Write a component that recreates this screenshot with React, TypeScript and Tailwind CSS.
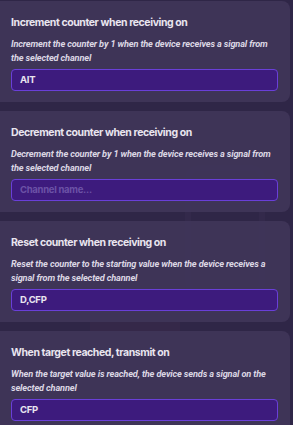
import type React from 'react';

type Field = {
	title: string;
	description: string;
	value: string;
};

const fields: Field[] = [
	{
		title: 'Increment counter when receiving on',
		description: 'Increment the counter by 1 when the device receives a signal from the selected channel',
		value: 'AIT',
	},
	{
		title: 'Decrement counter when receiving on',
		description: 'Decrement the counter by 1 when the device receives a signal from the selected channel',
		value: '',
	},
	{
		title: 'Reset counter when receiving on',
		description:
			'Reset the counter to the starting value when the device receives a signal from the selected channel',
		value: 'D,CFP',
	},
	{
		title: 'When target reached, transmit on',
		description: 'When the target value is reached, the device sends a signal on the selected channel',
		value: 'CFP',
	},
];

const App: React.FC = () => {
	return (
		<div
			className="relative h-[425px] w-[293px] overflow-hidden bg-[#2f2647]"
			style={{ fontFamily: 'Inter, "Noto Sans", sans-serif' }}
		>
			{/* faint device art behind the panel */}
			<div className="pointer-events-none absolute top-[165px] left-[185px] h-[130px] w-[80px] rounded-[14px] border-[6px] border-[#4a3a66] opacity-15" />
			<div className="pointer-events-none absolute top-[300px] left-[90px] h-[125px] w-[90px] rounded-[10px] bg-[#5a3358] opacity-15" />

			<div className="relative flex flex-col gap-[9px] pt-px">
				{fields.map((field) => (
					<div
						key={field.title}
						className="h-[101px] w-[290px] rounded-r-lg bg-[#3f3558]/95 px-[11px] pt-[15px]"
					>
						<div className="text-[10.5px] leading-[14px] font-bold tracking-[-0.04em] text-[#e9e5ef]">
							{field.title}
						</div>
						<div
							className="mt-[7px] text-[9.2px] leading-[14px] font-bold tracking-[-0.015em] text-[#dcd7e4] italic"
							style={{ fontFamily: 'Roboto, "Liberation Sans", sans-serif' }}
						>
							{field.description}
						</div>
						<input
							type="text"
							readOnly
							value={field.value}
							placeholder="Channel name..."
							className="mt-[2px] h-[22px] w-[267px] rounded-[4px] border border-[#6a3fd8] bg-[#3d1b7d] px-[8px] text-[9.5px] font-bold tracking-[-0.03em] text-[#e9e5ef] outline-none placeholder:text-[#6c52a6]"
						/>
					</div>
				))}
			</div>
		</div>
	);
};

export default App;
